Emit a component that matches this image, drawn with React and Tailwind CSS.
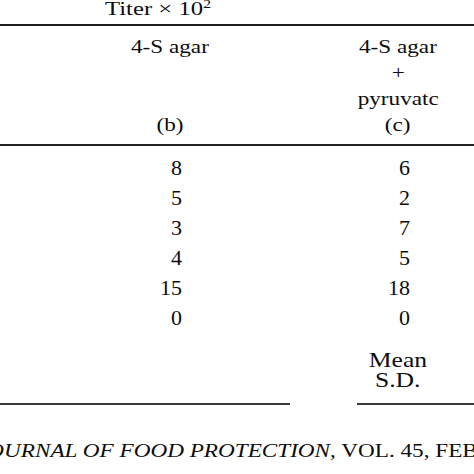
import React from 'react';

const serif = { fontFamily: '"Liberation Serif", "Times New Roman", serif' };

const rows = [
  ['8', '6'],
  ['5', '2'],
  ['3', '7'],
  ['4', '5'],
  ['15', '18'],
  ['0', '0'],
];

const Cells = ({ b, c, className = '' }) => (
  <div className={`grid grid-cols-[130px_80px_148px_80px_1fr] ${className}`}>
    <div />
    <div>{b}</div>
    <div />
    <div>{c}</div>
    <div />
  </div>
);

const Stretch = ({ children, origin = 'origin-center' }) => (
  <span className={`inline-block scale-x-[1.22] ${origin}`}>{children}</span>
);

const App = () => {
  return (
    <div className="w-[474px] h-[474px] overflow-hidden bg-white text-[#0d0d0d]" style={serif}>
      <div className="h-[17px] pl-[105px] text-[19px] leading-[17px] whitespace-nowrap">
        <span className="inline-block scale-x-[1.3] origin-left">
          Titer × 10<span className="text-[12px] leading-[0] relative top-[-7px]">2</span>
        </span>
      </div>
      <div className="mt-[7px] h-[2px] bg-[#1e1e1e]" />

      <Cells
        className="pt-[8px] pb-[6px] text-[19px] leading-[26px] text-center"
        b={
          <>
            <div><Stretch>4-S agar</Stretch></div>
            <div>&nbsp;</div>
            <div>&nbsp;</div>
            <div><Stretch>(b)</Stretch></div>
          </>
        }
        c={
          <>
            <div><Stretch>4-S agar</Stretch></div>
            <div><Stretch>+</Stretch></div>
            <div><Stretch>pyruvatc</Stretch></div>
            <div><Stretch>(c)</Stretch></div>
          </>
        }
      />
      <div className="h-[2px] bg-[#232323]" />

      <div className="pt-[7px] text-[22px] leading-[30px]">
        {rows.map(([b, c], i) => (
          <Cells
            key={i}
            className="text-right"
            b={<div className="pr-[28px]">{b}</div>}
            c={<div className="pr-[28px]">{c}</div>}
          />
        ))}
      </div>

      <Cells
        className="mt-[17px] text-[21px] leading-[20px] text-center"
        b={null}
        c={
          <>
            <div><Stretch>Mean</Stretch></div>
            <div><Stretch>S.D.</Stretch></div>
          </>
        }
      />

      <div className="mt-[13px] flex h-[2px]">
        <div className="w-[290px] bg-[#3a3a3a]" />
        <div className="ml-[67px] flex-1 bg-[#3a3a3a]" />
      </div>

      <div className="mt-[36px] text-[19px] leading-[20px] whitespace-nowrap overflow-hidden">
        <span className="inline-block scale-x-[1.22] origin-left -ml-[23px]">
          <i>JOURNAL OF FOOD PROTECTION</i>, VOL. 45, FEBRUARY 1982
        </span>
      </div>
    </div>
  );
};

export default App;
